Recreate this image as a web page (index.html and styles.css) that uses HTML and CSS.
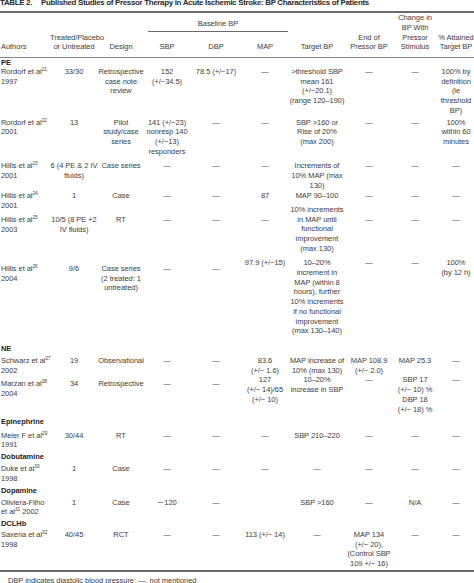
FILE: index.html
```html
<!DOCTYPE html>
<html>
<head>
<meta charset="utf-8">
<link rel="stylesheet" href="styles.css">
</head>
<body>
<div class="title"><span class="tno">TABLE 2.</span>Published Studies of Pressor Therapy in Acute Ischemic Stroke: BP Characteristics of Patients</div>
<div class="tbl">
  <div class="head">
    <div class="hc c1 a">Authors</div>
    <div class="hc c2">Treated/Placebo<br>or Untreated</div>
    <div class="hc c3">Design</div>
    <div class="base">Baseline BP</div>
    <div class="hs c4">SBP</div>
    <div class="hs c5">DBP</div>
    <div class="hs c6">MAP</div>
    <div class="hc c7">Target BP</div>
    <div class="hc c8">End of<br>Pressor BP</div>
    <div class="hc c9">Change in<br>BP With<br>Pressor<br>Stimulus</div>
    <div class="hc c10">% Attained<br>Target BP</div>
  </div>

  <div class="sec">PE</div>
  <div class="row">
    <div class="a">Rordorf et al<sup>21</sup><br>1997</div>
    <div>33/30</div>
    <div>Retrospective<br>case note<br>review</div>
    <div>152<br>(+/−34.5)</div>
    <div>78.5 (+/−17)</div>
    <div class="d">—</div>
    <div>&gt;threshold SBP<br>mean 161<br>(+/−20.1)<br>(range 120–190)</div>
    <div class="d">—</div>
    <div class="d">—</div>
    <div>100% by<br>definition<br>(ie<br>threshold<br>BP)</div>
  </div>
  <div class="row m2">
    <div class="a">Rordorf et al<sup>22</sup><br>2001</div>
    <div>13</div>
    <div>Pilot<br>study/case<br>series</div>
    <div>141 (+/−23)<br>nonresp 140<br>(+/−13)<br>responders</div>
    <div class="d">—</div>
    <div class="d">—</div>
    <div>SBP &gt;160 or<br>Rise of 20%<br>(max 200)</div>
    <div class="d">—</div>
    <div class="d">—</div>
    <div>100%<br>within 60<br>minutes</div>
  </div>
  <div class="row m5">
    <div class="a">Hillis et al<sup>23</sup><br>2001</div>
    <div>6 (4 PE &amp; 2 IV<br>fluids)</div>
    <div>Case series</div>
    <div class="d">—</div>
    <div class="d">—</div>
    <div class="d">—</div>
    <div>Increments of<br>10% MAP (max<br>130)</div>
    <div class="d">—</div>
    <div class="d">—</div>
    <div class="d">—</div>
  </div>
  <div class="row m1">
    <div class="a">Hillis et al<sup>24</sup><br>2001</div>
    <div>1</div>
    <div>Case</div>
    <div class="d">—</div>
    <div class="d">—</div>
    <div>87</div>
    <div>MAP 90–100</div>
    <div class="d">—</div>
    <div class="d">—</div>
    <div class="d">—</div>
  </div>
  <div class="row m4">
    <div class="a">Hillis et al<sup>25</sup><br>2003</div>
    <div>10/5 (8 PE +2<br>IV fluids)</div>
    <div>RT</div>
    <div class="d">—</div>
    <div class="d">—</div>
    <div class="d">—</div>
    <div class="up">10% increments<br>in MAP until<br>functional<br>improvement<br>(max 130)</div>
    <div class="d">—</div>
    <div class="d">—</div>
    <div class="d">—</div>
  </div>
  <div class="row m5">
    <div class="a dn6">Hillis et al<sup>26</sup><br>2004</div>
    <div class="dn6">9/6</div>
    <div class="dn6">Case series<br>(2 treated: 1<br>untreated)</div>
    <div class="d dn6">—</div>
    <div class="d dn6">—</div>
    <div>97.9 (+/−15)</div>
    <div>10–20%<br>increment in<br>MAP (within 8<br>hours), further<br>10% increments<br>if no functional<br>improvement<br>(max 130–140)</div>
    <div class="d">—</div>
    <div class="d">—</div>
    <div>100%<br>(by 12 h)</div>
  </div>

  <div class="sec m8">NE</div>
  <div class="row m3">
    <div class="a">Schwarz et al<sup>27</sup><br>2002</div>
    <div>19</div>
    <div>Observational</div>
    <div class="d">—</div>
    <div class="d">—</div>
    <div>83.6<br>(+/− 1.6)</div>
    <div>MAP increase of<br>10% (max 130)</div>
    <div>MAP 108.9<br>(+/− 2.0)</div>
    <div>MAP 25.3</div>
    <div class="d">—</div>
  </div>
  <div class="row">
    <div class="a dn4">Marzan et al<sup>28</sup><br>2004</div>
    <div class="dn4">34</div>
    <div class="dn4">Retrospective</div>
    <div class="d dn4">—</div>
    <div class="d dn4">—</div>
    <div>127<br>(+/− 14)/65<br>(+/− 10)</div>
    <div>10–20%<br>increase in SBP</div>
    <div class="d">—</div>
    <div>SBP 17<br>(+/− 10) %<br>DBP 18<br>(+/− 18) %</div>
    <div class="d">—</div>
  </div>

  <div class="sec m3">Epinephrine</div>
  <div class="row m4">
    <div class="a">Meier F et al<sup>29</sup><br>1991</div>
    <div>30/44</div>
    <div>RT</div>
    <div class="d">—</div>
    <div class="d">—</div>
    <div class="d">—</div>
    <div>SBP 210–220</div>
    <div class="d">—</div>
    <div class="d">—</div>
    <div class="d">—</div>
  </div>

  <div class="sec m2">Dobutamine</div>
  <div class="row m3">
    <div class="a">Duke et al<sup>30</sup><br>1998</div>
    <div>1</div>
    <div>Case</div>
    <div class="d">—</div>
    <div class="d">—</div>
    <div class="d">—</div>
    <div class="d">—</div>
    <div class="d">—</div>
    <div class="d">—</div>
    <div class="d">—</div>
  </div>

  <div class="sec m2">Dopamine</div>
  <div class="row m3">
    <div class="a">Oliviera-Filho<br>et al<sup>31</sup> 2002</div>
    <div>1</div>
    <div>Case</div>
    <div>∼120</div>
    <div class="d">—</div>
    <div></div>
    <div>SBP &gt;160</div>
    <div class="d">—</div>
    <div>N/A</div>
    <div class="d">—</div>
  </div>

  <div class="sec m2">DCLHb</div>
  <div class="row m2">
    <div class="a">Saxena et al<sup>32</sup><br>1998</div>
    <div>40/45</div>
    <div>RCT</div>
    <div class="d">—</div>
    <div class="d">—</div>
    <div>113 (+/− 14)</div>
    <div class="d">—</div>
    <div>MAP 134<br>(+/− 20),<br>(Control SBP<br>109 +/− 16)</div>
    <div class="d">—</div>
    <div class="d">—</div>
  </div>
</div>
<div class="foot">DBP indicates diastolic blood pressure; —, not mentioned</div>
</body>
</html>
```
FILE: styles.css
```css
html, body {
  margin: 0;
  padding: 0;
  background: #ffffff;
}
body {
  width: 474px;
  height: 583px;
  overflow: hidden;
  font-family: "Liberation Sans Narrow", "Liberation Sans", Arial, sans-serif;
  font-size: 7.5px;
  letter-spacing: -0.05px;
  line-height: 9.7px;
  color: #3c3c3c;
}
.title {
  margin-top: -2px;
  height: 10px;
  line-height: 10px;
  font-size: 7.9px;
  letter-spacing: -0.3px;
  font-weight: bold;
  color: #2a2a2a;
  white-space: nowrap;
}
.tno {
  margin-right: 9px;
}
.tbl {
  margin-top: 3px;
  border-top: 2px solid #6a6a6a;
  border-bottom: 2px solid #6a6a6a;
  padding-bottom: 1px;
}
.head,
.row {
  display: grid;
  grid-template-columns: 50px 48px 46px 46px 52px 46px 58px 46px 46px 36px;
  white-space: nowrap;
  text-align: center;
}
.head {
  grid-template-rows: 19px 25px;
  border-bottom: 1px solid #8a8a8a;
}
.hc {
  grid-row: 1 / 3;
  align-self: end;
  padding-bottom: 5px;
}
.hs {
  grid-row: 2;
  align-self: end;
  padding-bottom: 5px;
}
.c1 { grid-column: 1; }
.c2 { grid-column: 2; }
.c3 { grid-column: 3; }
.c4 { grid-column: 4; }
.c5 { grid-column: 5; }
.c6 { grid-column: 6; }
.c7 { grid-column: 7; }
.c8 { grid-column: 8; }
.c9 { grid-column: 9; }
.c10 { grid-column: 10; }
.base {
  grid-row: 1;
  grid-column: 4 / 7;
  align-self: start;
  margin-left: 4px;
  padding-top: 6px;
  padding-bottom: 2px;
  border-bottom: 1px solid #6a6a6a;
  text-align: center;
}
.a {
  text-align: left;
  padding-left: 1px;
}
.sec {
  font-weight: bold;
  color: #222;
  line-height: 9px;
  padding-left: 1px;
}
sup {
  font-size: 4.8px;
  line-height: 0;
  vertical-align: 3px;
}
.d {
  color: #555;
}
.up {
  margin-top: -10.5px;
}
.dn6 { padding-top: 5.5px; }
.dn4 { padding-top: 4px; }
.m1 { margin-top: 1px; }
.m2 { margin-top: 2px; }
.m3 { margin-top: 3px; }
.m4 { margin-top: 4.5px; }
.m5 { margin-top: 5px; }
.m8 { margin-top: 8px; }
.foot {
  padding-left: 8px;
  margin-top: 4px;
  line-height: 9.7px;
  white-space: nowrap;
}
```
